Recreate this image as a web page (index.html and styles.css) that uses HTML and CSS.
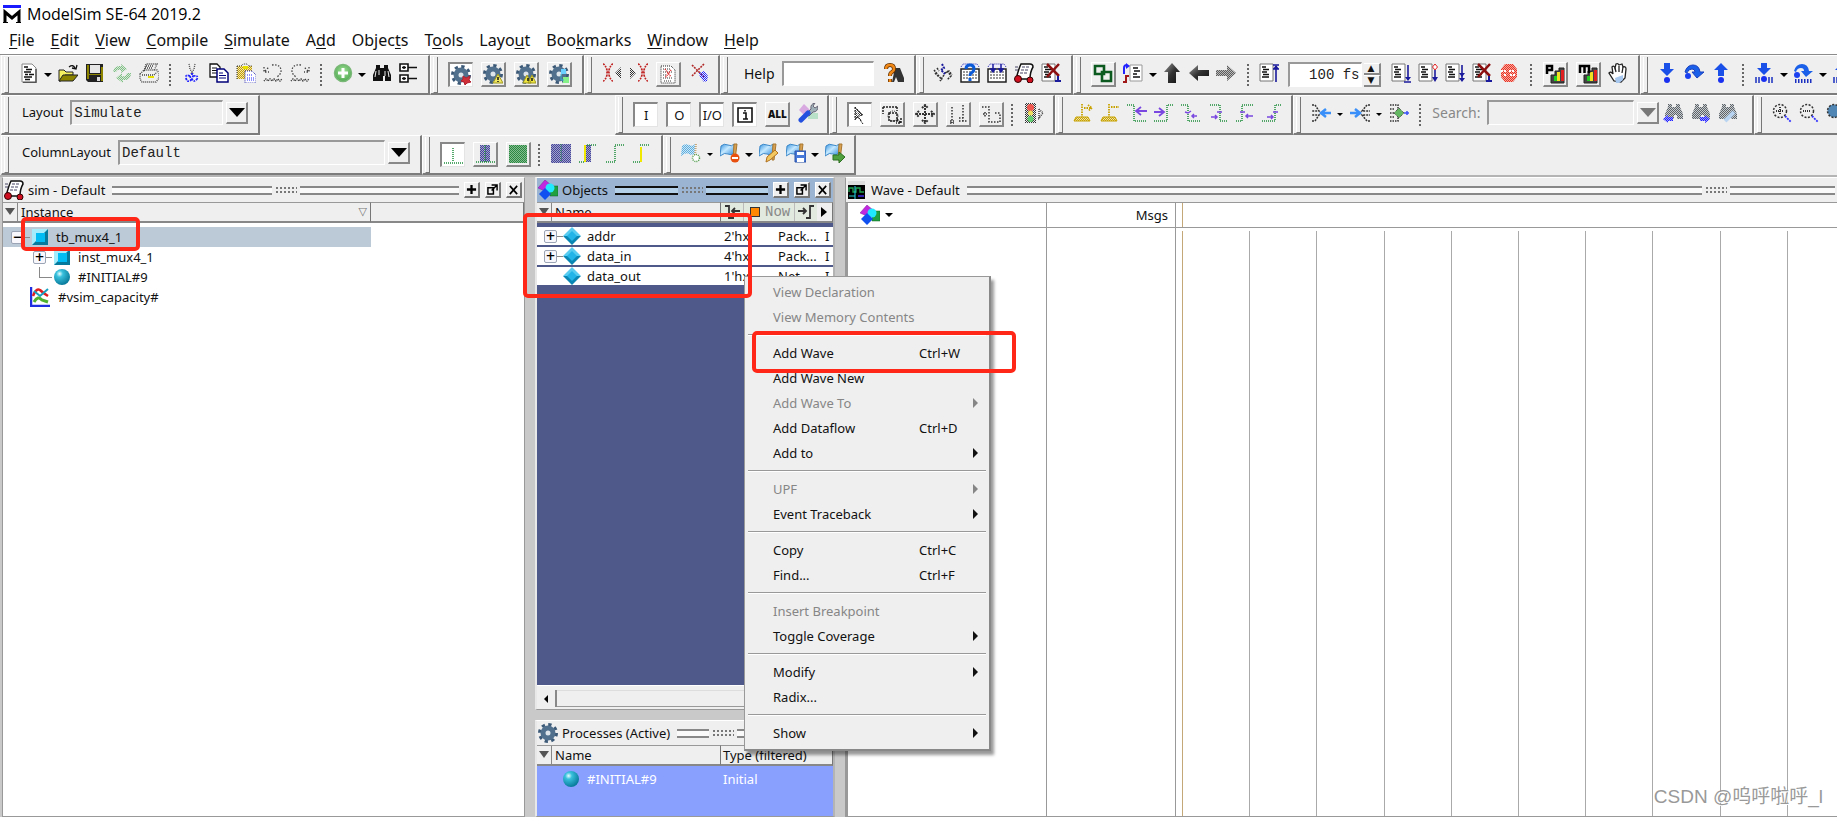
FILE: index.html
```html
<!DOCTYPE html>
<html lang="en">
<head>
    <meta charset="UTF-8">
    <meta name="viewport" content="width=device-width, initial-scale=1.0">
    <title>ModelSim SE-64 2019.2</title>
    <link rel="stylesheet" href="styles.css">
</head>
<body>

<!-- Icon sprite -->
<svg class="sprite" width="0" height="0" aria-hidden="true">
    <defs>
        <pattern id="d-black" width="2" height="2" patternUnits="userSpaceOnUse"><path d="M0 0h1v1H0zM1 1h1v1H1z" fill="#333"/></pattern>
        <pattern id="d-blue" width="2" height="2" patternUnits="userSpaceOnUse"><path d="M0 0h1v1H0zM1 1h1v1H1z" fill="#22f"/></pattern>
        <pattern id="d-sky" width="2" height="2" patternUnits="userSpaceOnUse"><path d="M0 0h1v1H0zM1 1h1v1H1z" fill="#5aaee0"/></pattern>
        <pattern id="d-navy" width="2" height="2" patternUnits="userSpaceOnUse"><path d="M0 0h2v2H0z" fill="#a4a4c8"/><path d="M0 0h1v1H0zM1 1h1v1H1z" fill="#44449c"/></pattern>
        <pattern id="d-green" width="2" height="2" patternUnits="userSpaceOnUse"><path d="M0 0h2v2H0z" fill="#84bc90"/><path d="M0 0h1v1H0zM1 1h1v1H1z" fill="#2a8842"/></pattern>
        <pattern id="d-lime" width="2" height="2" patternUnits="userSpaceOnUse"><path d="M0 0h2v2H0z" fill="#d8e8d8"/><path d="M0 0h1v1H0zM1 1h1v1H1z" fill="#7fbf85"/></pattern>
        <pattern id="d-red" width="2" height="2" patternUnits="userSpaceOnUse"><path d="M0 0h2v2H0z" fill="#f4a8a0"/><path d="M0 0h1v1H0zM1 1h1v1H1z" fill="#ea3323"/></pattern>
        <pattern id="d-gold" width="2" height="2" patternUnits="userSpaceOnUse"><path d="M0 0h2v2H0z" fill="#eee3b0"/><path d="M0 0h1v1H0zM1 1h1v1H1z" fill="#c8a200"/></pattern>
        <linearGradient id="g-grey" x1="0" y1="0" x2="1" y2="1"><stop offset="0" stop-color="#999"/><stop offset=".5" stop-color="#333"/><stop offset="1" stop-color="#111"/></linearGradient>
        <linearGradient id="g-flag" x1="0" y1="0" x2="1" y2="1"><stop offset="0" stop-color="#2f8fe0"/><stop offset=".45" stop-color="#c4e8ff"/><stop offset="1" stop-color="#2a86d8"/></linearGradient>
        <radialGradient id="g-ball" cx=".35" cy=".3" r=".7"><stop offset="0" stop-color="#e8ffff"/><stop offset=".3" stop-color="#38c0dc"/><stop offset="1" stop-color="#0a7c9c"/></radialGradient>
        <radialGradient id="g-add" cx=".5" cy=".4" r=".6"><stop offset="0" stop-color="#a4e49c"/><stop offset="1" stop-color="#4fa850"/></radialGradient>
    </defs>

    <symbol id="logo" viewBox="0 0 18 18"><path d="M0 0h18v3H0z" fill="#1a1aff"/><path d="M2 17V7l7 6 7-6v10" fill="none" stroke="#000" stroke-width="3"/><path d="M0 18h5M13 18h5" stroke="#000" stroke-width="2"/></symbol>
    <symbol id="doc" viewBox="0 0 20 20"><path d="M3 1h10l4 4v14H3z" fill="#fff" stroke="#888"/><path d="M5 4h4M7 6.500h6M5 9h7M6 11.500h3m1 0h5M5 14h8M6 16.500h5" stroke="#111" stroke-width="1.500"/><path d="M17 6v13.500H4" fill="none" stroke="#555" stroke-width="1.500"/></symbol>
    <symbol id="open" viewBox="0 0 20 20"><path d="M11 4q4-3 6 1m2-3l-1 4-4-1" fill="none" stroke="#111" stroke-width="1.300"/><path d="M1 7h5l2 2h7v3H7l-4 6H1z" fill="#f4f060" stroke="#222"/><path d="M5 12h15l-5 6H1z" fill="#8c8400" stroke="#222"/></symbol>
    <symbol id="save" viewBox="0 0 20 20"><path d="M1 1h17v18H3l-2-2z" fill="#222"/><path d="M2 2h2v14H2zM16 4h2v14h-2z" fill="#8c8400"/><path d="M5 2h10v8H5z" fill="#e6e6e6"/><path d="M3 11h14v1H3z" fill="#8c8400"/><path d="M12 14h3v4h-3z" fill="#ddd"/></symbol>
    <symbol id="refresh" viewBox="0 0 20 20"><path d="M1 9q1-7 8-6V1l6 5-6 4V7Q5 6 4 9z" fill="url(#d-lime)"/><path d="M19 10q0 8-8 7v3l-7-5 6-5v3q4 1 5-3z" fill="url(#d-lime)"/></symbol>
    <symbol id="print" viewBox="0 0 20 20"><path d="M5 8l2-7h11l-3 7M1 11l4-4h13l2 3v5l-3 4H3l-2-3zM3 12h12l3-3M7 3h8M6 5h8" fill="none" stroke="#444" stroke-width="1.300" stroke-dasharray="1 1"/><path d="M9 14h6" stroke="#e8e000" stroke-width="2"/></symbol>
    <symbol id="cut" viewBox="0 0 20 20"><path d="M7 1l1 5 3 5M13 1l-1 5-3 5" fill="none" stroke="#444" stroke-width="1.300" stroke-dasharray="1 1"/><path d="M10 10v3M8 13q-5-2-4 2 1 5 5 2zM11 13q6-1 4 3-3 4-5 0z" fill="none" stroke="#22f" stroke-width="1.700" stroke-dasharray="2 1"/></symbol>
    <symbol id="copy" viewBox="0 0 20 20"><path d="M1 1h7l3 3v10H1z" fill="#fff" stroke="#111" stroke-width="1.300"/><path d="M3 5h5M3 7.500h6M3 10h6" stroke="#111"/><path d="M8 6h7l4 4v9H8z" fill="#fff" stroke="#00007a" stroke-width="1.500"/><path d="M10 10h4M10 12.500h7M10 15h7" stroke="#00007a"/></symbol>
    <symbol id="paste" viewBox="0 0 20 20"><path d="M1 3h15v13H1z" fill="url(#d-gold)"/><path d="M1 3h4l2-2h4l2 2h3M1 3v13" fill="none" stroke="#333" stroke-dasharray="1 1"/><path d="M7 3h5v3H7z" fill="#e8e000"/><path d="M9 8h7l4 4v8H9z" fill="#fff" stroke="#22a" stroke-dasharray="1 1"/><path d="M11 12h5M11 15h7M11 17h7" stroke="#22f" stroke-dasharray="1 1"/></symbol>
    <symbol id="undo" viewBox="0 0 20 20"><path d="M1 4v5h5M2 8L6 4M9 2q9-1 9 6 0 3-4 6" fill="none" stroke="#444" stroke-width="1.300" stroke-dasharray="1.500 1.500"/><path d="M1 18l2-2 2 2 2-2 2 2 2-2 2 2 2-2 2 2 2-2" fill="none" stroke="#333" stroke-dasharray="1 1" stroke-width="1.500"/></symbol>
    <symbol id="redo" viewBox="0 0 20 20"><path d="M19 4v5h-5M18 8l-4-4M11 2Q2 1 2 8q0 3 4 6" fill="none" stroke="#444" stroke-width="1.300" stroke-dasharray="1.500 1.500"/><path d="M1 18l2-2 2 2 2-2 2 2 2-2 2 2 2-2 2 2 2-2" fill="none" stroke="#333" stroke-dasharray="1 1" stroke-width="1.500"/></symbol>
    <symbol id="add" viewBox="0 0 20 20"><circle cx="10" cy="10" r="8.500" fill="url(#g-add)" stroke="#7ab878" stroke-width="1.500"/><path d="M10 5v10M5 10h10" stroke="#fff" stroke-width="3"/></symbol>
    <symbol id="find" viewBox="0 0 20 20"><path d="M4 2h4v3h4V2h4v3l3 7v6h-6v-5h-2v5H1v-6l3-7z" fill="#111"/><path d="M4 8l-1 6M7 7v5M13 8v5M16 8l1 6" stroke="#eee" stroke-width="1"/></symbol>
    <symbol id="tree" viewBox="0 0 20 20"><path d="M1 1h8v7H1zM1 12h8v7H1z" fill="#fff" stroke="#111" stroke-width="1.600"/><path d="M3 4.500h4M5 3v3M3 15.500h4M5 14v3M9 4.500h9M9 15.500h9" stroke="#111" stroke-width="1.500"/></symbol>
    <symbol id="gear" viewBox="0 0 20 20"><circle cx="10" cy="10" r="8.500" fill="none" stroke="#3c5a78" stroke-width="3" stroke-dasharray="3.300 3.375"/><circle cx="10" cy="10" r="5" fill="#dde4ea" stroke="#50708e" stroke-width="5"/></symbol>
    <symbol id="gear-red" viewBox="0 0 20 20"><use href="#gear"/><path d="M12 11l3 2 4-2-1 4 2 2-4 1-2 2-1-3-3-1 2-2z" fill="#d03038" stroke="#b02030"/></symbol>
    <symbol id="gear-warn" viewBox="0 0 20 20"><use href="#gear"/><path d="M15 10l5 9H10z" fill="#f0e860" stroke="#a09820"/><path d="M15 13v3M15 17v1" stroke="#111" stroke-width="1.500"/></symbol>
    <symbol id="gear-warns" viewBox="0 0 20 20"><use href="#gear"/><path d="M11 11l4 8H7zM16 11l4 8h-8z" fill="#f0e840" stroke="#a09820"/><path d="M12 14v3M16 14v3" stroke="#111" stroke-width="1.500"/></symbol>
    <symbol id="gear-tree" viewBox="0 0 20 20"><use href="#gear"/><path d="M12 5h5v5h-5z" fill="#6ad0ff"/><path d="M14 13h6v6h-6z" fill="#86f088"/><path d="M12 10v6h3" stroke="#3ab0d0" fill="none"/></symbol>
    <symbol id="x-prev" viewBox="0 0 20 20"><path d="M1 1q2 0 4 6v5q-2 6-4 6M11 1Q9 1 7 7v5q2 6 4 6M5 9h2" fill="none" stroke="#c02020" stroke-width="1.600" stroke-dasharray="2 1"/><path d="M19 4v12l-6-6z" fill="url(#d-black)"/></symbol>
    <symbol id="x-next" viewBox="0 0 20 20"><path d="M9 1q2 0 4 6v5q-2 6-4 6M19 1q-2 0-4 6v5q2 6 4 6M13 9h2" fill="none" stroke="#c02020" stroke-width="1.600" stroke-dasharray="2 1"/><path d="M1 4v12l6-6z" fill="url(#d-black)"/></symbol>
    <symbol id="x-doc" viewBox="0 0 20 20"><path d="M3 2h10l4 4v13H3z" fill="#fff" stroke="#222" stroke-dasharray="1 1"/><path d="M5 5h8M5 8h9M5 11h3M5 14h9M6 17h8" stroke="#333" stroke-dasharray="1 1"/><path d="M7 5l6 8M13 6l-6 8" stroke="#e02020" stroke-dasharray="1 1" stroke-width="1.500"/></symbol>
    <symbol id="x-pen" viewBox="0 0 20 20"><path d="M3 2l12 12M15 1L3 13" stroke="#b02828" stroke-width="1.600" stroke-dasharray="2 1"/><path d="M10 10l5-2 4 5-1 5-3 1-4-5z" fill="url(#d-blue)"/></symbol>
    <symbol id="help-find" viewBox="0 0 20 20"><path d="M11 5h5l4 10v4h-6l-2-5-2 5H8z" fill="#333"/><path d="M2 6q0-4 4-4t4 4q0 2-2 3-2 1-2 4M6 16v3" fill="none" stroke="#5a2c00" stroke-width="4"/><path d="M2 6q0-4 4-4t4 4q0 2-2 3-2 1-2 4M6 16v3" fill="none" stroke="#f08818" stroke-width="2.600"/></symbol>
    <symbol id="compile" viewBox="0 0 20 20"><path d="M1 7l8 10M4 5l2 3M11 12l-4 6M14 8l4 5-4 4M2 10l4 4M12 10l4-2 3 4" fill="none" stroke="#333" stroke-width="1.500" stroke-dasharray="2 1"/><path d="M9 1l2 4-3 2 4 4" fill="none" stroke="#1a1a9c" stroke-width="2" stroke-dasharray="2 1"/></symbol>
    <symbol id="tray" viewBox="0 0 20 20"><path d="M1 4l2-3h14l2 3" fill="#eef" stroke="#22a" stroke-dasharray="1 1"/><path d="M1 6h18v13H1z" fill="#fff" stroke="#222" stroke-width="1.500"/><path d="M3 9h14M3 12h14M3 15h14" stroke="#333" stroke-dasharray="2 1"/></symbol>
    <symbol id="compile-ask" viewBox="0 0 20 20"><use href="#tray"/><path d="M6 6q0-4 4-4t4 4q0 2-2 3.500-2 1-2 3.500M10 15v3" fill="none" stroke="#0a5ad8" stroke-width="3"/></symbol>
    <symbol id="compile-all" viewBox="0 0 20 20"><use href="#tray"/><path d="M6 1v7M4 6l2 3 2-3zM14 1v7M12 6l2 3 2-3z" stroke="#1a1a9c" stroke-width="1.500" fill="#1a1a9c"/></symbol>
    <symbol id="sim" viewBox="0 0 20 20"><path d="M7 1q-2 4-5 15h14q0-7 3-12 0-3-3-3z" fill="#fff" stroke="#111" stroke-width="1.500"/><path d="M8 4h8M7 7h8M6 10h8M1 4h3M1 7h3" stroke="#446" stroke-dasharray="3 1"/><circle cx="4" cy="16" r="3.500" fill="#d01020" stroke="#300"/><circle cx="16" cy="17" r="3" fill="#d01020" stroke="#300"/></symbol>
    <symbol id="script" viewBox="0 0 20 20"><path d="M1 1h13v17H1z" fill="#fff" stroke="#777"/><path d="M3 4h4M4 6.500h6M3 9h5M4 11.500h6M3 14h7" stroke="#111" stroke-width="1.500"/></symbol>
    <symbol id="break" viewBox="0 0 20 20"><use href="#script"/><path d="M6 1l12 12M18 1L6 14" stroke="#8c1010" stroke-width="2.500"/><path d="M17 13v4M14 18h6" stroke="#1a1a9c" stroke-width="2"/></symbol>
    <symbol id="link" viewBox="0 0 20 20"><path d="M2 2h9v8H2zM9 8h9v9H9z" fill="none" stroke="#0c5a20" stroke-width="2.600"/></symbol>
    <symbol id="restart" viewBox="0 0 20 20"><path d="M7 2h12v16H7z" fill="#fff" stroke="#999"/><path d="M10 5h5M11 8h6M10 11h4M10 14h7" stroke="#111" stroke-width="1.500"/><path d="M1 11V5q0-3 3-3" fill="none" stroke="#22f" stroke-width="2"/><path d="M3 0l4 3-4 3z" fill="#22f"/><path d="M0 19h3v-6h3" fill="none" stroke="#a01818" stroke-width="2"/></symbol>
    <symbol id="up" viewBox="0 0 20 20"><path d="M10 0l8 9h-4v11H6V9H2z" fill="url(#g-grey)"/></symbol>
    <symbol id="left" viewBox="0 0 20 20"><path d="M0 10l9-8v5h11v6H9v5z" fill="url(#g-grey)"/></symbol>
    <symbol id="right" viewBox="0 0 20 20"><path d="M20 10l-9-8v5H0v6h11v5z" fill="#bbb"/><path d="M20 10l-9-8v5H0v6h11v5z" fill="url(#d-black)" opacity=".7"/></symbol>
    <symbol id="run-len" viewBox="0 0 20 20"><use href="#script"/><path d="M17 19V3M14 2h6M14 6h6" stroke="#1a1a9c" stroke-width="1.600" fill="none"/><path d="M14 6l3-4 3 4z" fill="#1a1a9c"/></symbol>
    <symbol id="run" viewBox="0 0 20 20"><use href="#script"/><path d="M17 2v12M13 19h7" stroke="#1a1a9c" stroke-width="1.600"/><path d="M14 14h6l-3 4z" fill="#1a1a9c"/></symbol>
    <symbol id="run-c" viewBox="0 0 20 20"><use href="#script"/><path d="M17 7v8" stroke="#1a1a9c" stroke-width="1.600"/><path d="M14 14h6l-3 5z" fill="#1a1a9c"/><path d="M17 1l2.500 3-2.500 3-2.500-3z" fill="#fff" stroke="#e02020"/></symbol>
    <symbol id="run-all" viewBox="0 0 20 20"><use href="#script"/><path d="M17 2v14" stroke="#1a1a9c" stroke-width="1.600"/><path d="M14 10h6l-3 4zM14 15h6l-3 4z" fill="#1a1a9c"/></symbol>
    <symbol id="stop" viewBox="0 0 20 20"><path d="M6 1h8l4 5v8l-4 5H6l-4-5V6z" fill="url(#d-red)"/><path d="M2 8h6M10 8h6M5 12h3M11 12h5" stroke="#fff" stroke-width="2" stroke-dasharray="2 1"/></symbol>
    <symbol id="bars" viewBox="0 0 20 20"><path d="M6 19V11h4V7h4V4h5v15z" fill="#444" stroke="#222"/><path d="M9 12h3v5H9z" fill="#20d020"/><path d="M12 8h3v9h-3z" fill="#f0e020"/><path d="M16 6h3v11h-3z" fill="#e02020"/></symbol>
    <symbol id="prof-p" viewBox="0 0 20 20"><use href="#bars"/><path d="M2 10V2h5v4H2" fill="none" stroke="#000" stroke-width="2.500"/></symbol>
    <symbol id="prof-m" viewBox="0 0 20 20"><use href="#bars"/><path d="M2 9V2h9v7M6.500 2v7" fill="none" stroke="#000" stroke-width="2.500"/></symbol>
    <symbol id="hand" viewBox="0 0 20 20"><path d="M6 18L1 10q2-2 4 1L4 4q2-2 3 1l1-4q2-1 3 1l3-1 1 3q3-1 3 2l-1 9-4 4z" fill="#fff" stroke="#222" stroke-width="1.300"/><path d="M7 5l1 4M11 3v6M15 4l-1 6" stroke="#222" stroke-width="1.300"/><path d="M7 15l8-3v5l-4 3H8z" fill="#a8c8f0"/></symbol>
    <symbol id="step-in" viewBox="0 0 20 20"><path d="M7 0h6v6h4l-7 7-7-7h4z" fill="#1a50e8"/><circle cx="10" cy="17" r="3" fill="#1a30f0"/></symbol>
    <symbol id="step-over" viewBox="0 0 20 20"><path d="M1 9Q3 2 9 2q6 0 7 7h4l-7 6-5-6h3q0-3-3-3-4 0-5 4z" fill="#1a60e8" stroke="#1a40c0"/><circle cx="4" cy="13" r="3" fill="#1a40f0"/></symbol>
    <symbol id="step-out" viewBox="0 0 20 20"><path d="M7 13h6V7h4l-7-7-7 7h4z" fill="#1a50e8"/><circle cx="10" cy="17" r="3" fill="#1a30f0"/></symbol>
    <symbol id="in-cur" viewBox="0 0 20 20"><path d="M7 0h6v5h4l-7 7-7-7h4z" fill="#1a50e8"/><circle cx="10" cy="16" r="3" fill="#1a30f0"/><path d="M2 14v6M5 14v6M15 14v6M18 14v6" stroke="#1a30c0" stroke-width="1.500"/></symbol>
    <symbol id="over-cur" viewBox="0 0 20 20"><path d="M1 8Q3 1 9 1q6 0 7 7h4l-7 6-5-6h3q0-3-3-3-4 0-5 4z" fill="#1a60e8"/><circle cx="4" cy="12" r="3" fill="#1a40f0"/><path d="M2 18h18" stroke="#1a30c0" stroke-width="4" stroke-dasharray="1.500 1.500"/></symbol>
    <symbol id="out-cur" viewBox="0 0 20 20"><path d="M7 12h6V7h4l-7-7-7 7h4z" fill="#1a50e8"/><circle cx="10" cy="16" r="3" fill="#1a30f0"/><path d="M2 14v6M5 14v6" stroke="#1a30c0" stroke-width="1.500"/></symbol>
    <symbol id="info" viewBox="0 0 20 20"><path d="M3 3h14v14H3z" fill="#fff" stroke="#111" stroke-width="1.600"/><path d="M8 8h3v6M8 14h5M10 5v1.500" fill="none" stroke="#111" stroke-width="1.600"/></symbol>
    <symbol id="wrench" viewBox="0 0 20 20"><path d="M6 1l6 6-6 5-5-5z" fill="#d8a8e0"/><path d="M10 10h10v6H10z" fill="#b8e0c8"/><path d="M8 11l5-5q-1-5 4-6l-2 3 2 2 3-2q0 6-5 6l-4 4z" fill="#a0b0b8" stroke="#667"/><path d="M3 17l7-7" stroke="#2450e0" stroke-width="5" stroke-linecap="round"/></symbol>
    <symbol id="pointer" viewBox="0 0 20 20"><path d="M5 2v13l3-3 5 7M5 2l8 8-5 1" fill="url(#d-black)" stroke="#222" stroke-dasharray="2 1"/></symbol>
    <symbol id="zoom-area" viewBox="0 0 20 20"><path d="M1 3h14M1 3v7M15 3v4M7 9h8v8H7zM15 15l4 4M19 14v5h-5" fill="none" stroke="#222" stroke-width="1.500" stroke-dasharray="2 1"/><circle cx="11" cy="12" r="5" fill="none" stroke="#222" stroke-dasharray="1 1"/></symbol>
    <symbol id="pan" viewBox="0 0 20 20"><path d="M10 1v18M1 10h18M7 4l3-3 3 3M7 16l3 3 3-3M4 7l-3 3 3 3M16 7l3 3-3 3" fill="none" stroke="#333" stroke-width="2" stroke-dasharray="2 1"/></symbol>
    <symbol id="two-cur" viewBox="0 0 20 20"><path d="M4 3v16M15 1v18M2 17h4M11 17h8M2 19h4M11 14h4" fill="none" stroke="#333" stroke-width="1.500" stroke-dasharray="1.500 1.500"/></symbol>
    <symbol id="edit-wave" viewBox="0 0 20 20"><path d="M1 3h7v15h11V9M2 10h4M4 8v5M14 9h5" fill="none" stroke="#333" stroke-width="1.500" stroke-dasharray="1.500 1.500"/></symbol>
    <symbol id="traffic" viewBox="0 0 20 20"><path d="M1 0h11v20H1z" fill="url(#d-black)"/><circle cx="6.500" cy="4.500" r="3.500" fill="#f05850"/><circle cx="6.500" cy="10" r="2.500" fill="#f0e060"/><circle cx="6.500" cy="16" r="3" fill="#60d070"/><path d="M15 6l4 4-4 5z" fill="none" stroke="#444" stroke-dasharray="1 1" stroke-width="1.500"/></symbol>
    <symbol id="cur-add" viewBox="0 0 20 20"><path d="M9 1v13M11 5h7M15 2l4 3-4 3" fill="none" stroke="#c8a200" stroke-width="1.800" stroke-dasharray="1.500 1"/><path d="M3 14h12l2 4H1z" fill="url(#d-gold)" stroke="#c8a200"/></symbol>
    <symbol id="cur-del" viewBox="0 0 20 20"><path d="M9 1v13M11 4h8" fill="none" stroke="#c8a200" stroke-width="1.800" stroke-dasharray="1.500 1"/><path d="M3 14h12l2 4H1z" fill="url(#d-gold)" stroke="#c8a200"/></symbol>
    <symbol id="fall" viewBox="0 0 20 20"><path d="M0 2h7v16h12" fill="none" stroke="#1f8f3c" stroke-width="1.500" stroke-dasharray="1 1"/></symbol>
    <symbol id="rise" viewBox="0 0 20 20"><path d="M0 18h13V2h7" fill="none" stroke="#1f8f3c" stroke-width="1.500" stroke-dasharray="1 1"/></symbol>
    <symbol id="prev-tr" viewBox="0 0 20 20"><use href="#fall"/><path d="M20 8H10M14 4l-5 4 5 4" fill="none" stroke="#7a48e0" stroke-width="1.800"/></symbol>
    <symbol id="next-tr" viewBox="0 0 20 20"><use href="#rise"/><path d="M0 9h9M5 5l5 4-5 4" fill="none" stroke="#7a48e0" stroke-width="1.800"/></symbol>
    <symbol id="prev-fall" viewBox="0 0 20 20"><use href="#fall"/><path d="M4 9l3 1 3-2M16 13h-5M13 11l-2 2 2 2" fill="none" stroke="#7a48e0" stroke-width="1.500"/></symbol>
    <symbol id="next-fall" viewBox="0 0 20 20"><path d="M2 2h10v16h8" fill="none" stroke="#1f8f3c" stroke-width="1.500" stroke-dasharray="1 1"/><path d="M9 9h5M3 14h6M7 12l2 2-2 2" fill="none" stroke="#7a48e0" stroke-width="1.500"/></symbol>
    <symbol id="prev-rise" viewBox="0 0 20 20"><path d="M1 18h6V2h12" fill="none" stroke="#1f8f3c" stroke-width="1.500" stroke-dasharray="1 1"/><path d="M5 9h5M18 13h-7M13 11l-2 2 2 2" fill="none" stroke="#7a48e0" stroke-width="1.500"/></symbol>
    <symbol id="next-rise" viewBox="0 0 20 20"><use href="#rise"/><path d="M11 9h5M5 14h6M9 12l2 2-2 2" fill="none" stroke="#7a48e0" stroke-width="1.500"/></symbol>
    <symbol id="expand-l" viewBox="0 0 20 20"><path d="M1 2h3l4 6H1M1 18h3l4-6H1" fill="none" stroke="#333" stroke-width="1.500" stroke-dasharray="2 1"/><path d="M20 10h-8M15 6l-5 4 5 4" fill="none" stroke="#3a90f8" stroke-width="2.500"/></symbol>
    <symbol id="expand-r" viewBox="0 0 20 20"><path d="M20 2h-3l-5 6h8M20 18h-3l-5-6h8" fill="none" stroke="#333" stroke-width="1.500" stroke-dasharray="2 1"/><path d="M0 10h8M5 6l5 4-5 4" fill="none" stroke="#3a90f8" stroke-width="2.500"/></symbol>
    <symbol id="expand-all" viewBox="0 0 20 20"><path d="M1 2h8v5M1 10h6M1 18h8v-5M1 6h5M1 14h5" fill="none" stroke="#333" stroke-width="1.500" stroke-dasharray="1.500 1"/><path d="M10 5l5 5-5 5-5-5z" fill="#64b864" stroke="#333" stroke-dasharray="1 1"/><path d="M15 10h5M18 8v4" stroke="#3a50f8" stroke-width="1.500"/></symbol>
    <symbol id="find-off" viewBox="0 0 20 20"><path d="M5 1h4v3h4V1h4v3l3 7v5h-6v-4h-3v4H2v-5l3-7z" fill="#c4ccd4"/><path d="M5 1h4v3h4V1h4v3l3 7v5h-6v-4h-3v4H2v-5l3-7z" fill="url(#d-black)" opacity=".7"/></symbol>
    <symbol id="find-prev" viewBox="0 0 20 20"><use href="#find-off"/><path d="M0 16l5-4v2h5v4H5v2z" fill="#99f"/><path d="M0 16l5-4v2h5v4H5v2z" fill="url(#d-blue)"/></symbol>
    <symbol id="find-next" viewBox="0 0 20 20"><use href="#find-off"/><path d="M20 16l-5-4v2h-5v4h5v2z" fill="#99f"/><path d="M20 16l-5-4v2h-5v4h5v2z" fill="url(#d-blue)"/></symbol>
    <symbol id="find-opt" viewBox="0 0 20 20"><use href="#find-off"/><path d="M8 18l9-9" stroke="#b8d4f0" stroke-width="4"/></symbol>
    <symbol id="zoom-in" viewBox="0 0 20 20"><circle cx="8" cy="8" r="6.500" fill="none" stroke="#333" stroke-width="1.500" stroke-dasharray="2 1.500"/><path d="M8 4v8M4 8h8" stroke="#333" stroke-width="2" stroke-dasharray="1 1"/><path d="M13 13l6 6" stroke="#33f" stroke-width="1.800" stroke-dasharray="2 1"/></symbol>
    <symbol id="zoom-out" viewBox="0 0 20 20"><circle cx="8" cy="8" r="6.500" fill="none" stroke="#333" stroke-width="1.500" stroke-dasharray="2 1.500"/><path d="M4 8h8" stroke="#333" stroke-width="2" stroke-dasharray="1 1"/><path d="M13 13l6 6" stroke="#33f" stroke-width="1.800" stroke-dasharray="2 1"/></symbol>
    <symbol id="zoom-full" viewBox="0 0 20 20"><circle cx="8" cy="8" r="6.500" fill="#4f86b4" stroke="#333" stroke-width="1.500" stroke-dasharray="2 1.500"/><path d="M13 13l6 6" stroke="#33f" stroke-width="1.800"/></symbol>
    <symbol id="cov-line" viewBox="0 0 20 20"><path d="M10 3v14M1 18h19" stroke="#1f8f3c" stroke-width="1.500" stroke-dasharray="1 1"/></symbol>
    <symbol id="cov-blue" viewBox="0 0 20 20"><path d="M5 1h10v17H5z" fill="url(#d-navy)"/><path d="M10 1v17M1 18h19" stroke="#1f8f3c" stroke-width="1.500" stroke-dasharray="1 1"/></symbol>
    <symbol id="cov-green" viewBox="0 0 20 20"><path d="M1 1h18v18H1z" fill="url(#d-green)"/></symbol>
    <symbol id="cov-navy" viewBox="0 0 20 20"><path d="M0 1h20v19H0z" fill="url(#d-navy)"/><path d="M10 1v18" stroke="#1f8f3c" stroke-dasharray="1 1"/></symbol>
    <symbol id="edge-b" viewBox="0 0 20 20"><path d="M8 2h5v17H8z" fill="url(#d-navy)"/><path d="M7 2v17" stroke="#f0e800" stroke-width="2"/><path d="M1 19h6M9 2h10" stroke="#1f8f3c" stroke-width="1.500" stroke-dasharray="1 1"/></symbol>
    <symbol id="edge-g" viewBox="0 0 20 20"><path d="M1 19h9V2h9" fill="none" stroke="#1f8f3c" stroke-width="1.500" stroke-dasharray="1 1"/></symbol>
    <symbol id="edge-y" viewBox="0 0 20 20"><path d="M9 4v15" stroke="#f0e800" stroke-width="2"/><path d="M1 19h7M8 2h10" fill="none" stroke="#1f8f3c" stroke-width="1.500" stroke-dasharray="1 1"/></symbol>
    <symbol id="flag" viewBox="0 0 20 20"><path d="M1 3q3-3 7-1t6-1v9q-3 3-6 1t-8 2z" fill="url(#g-flag)" stroke="#3c88c8"/><path d="M14 1h3l-2 16h-2z" fill="#d8a050" stroke="#a87830"/></symbol>
    <symbol id="flag-add" viewBox="0 0 20 20"><path d="M1 3q3-3 7-1t6-1v9q-3 3-6 1t-8 2z" fill="#cfe6f4"/><path d="M1 3q3-3 7-1t6-1v9q-3 3-6 1t-8 2z" fill="url(#d-sky)"/><path d="M15 1l-1 12" stroke="#c8a878" stroke-width="2" stroke-dasharray="1 1"/><circle cx="15" cy="15" r="3.500" fill="#fff" stroke="#4f9c4c" stroke-width="1.500" stroke-dasharray="1 1"/></symbol>
    <symbol id="flag-del" viewBox="0 0 20 20"><use href="#flag"/><circle cx="15" cy="15" r="4.500" fill="#e85010"/><path d="M12 15h6" stroke="#fff" stroke-width="2"/></symbol>
    <symbol id="flag-edit" viewBox="0 0 20 20"><use href="#flag"/><path d="M7 19l1-5 8-7 3 3-8 7z" fill="#f4c860" stroke="#b07020"/></symbol>
    <symbol id="flag-save" viewBox="0 0 20 20"><use href="#flag"/><path d="M9 8h11v11H9z" fill="#4878d8" stroke="#2850a8"/><path d="M11 9h7v3h-7zM11 15h7v4h-7z" fill="#fff"/></symbol>
    <symbol id="flag-go" viewBox="0 0 20 20"><use href="#flag"/><path d="M8 12h6V9l6 5-6 6v-3H8z" fill="#50a040" stroke="#2c7020"/></symbol>
    <symbol id="shapes" viewBox="0 0 20 20"><path d="M7 0l6 5-6 6-7-3z" fill="#c028e0" stroke="#801898" stroke-width=".5"/><path d="M12 6h8v10h-8z" fill="#20a040" stroke="#106020" stroke-width=".5"/><circle cx="12" cy="8" r="4.500" fill="#20e8ff"/><path d="M7 8l6 6-6 6-6-6z" fill="#1050f0"/></symbol>
    <symbol id="waveform" viewBox="0 0 20 20"><path d="M1 1h17v18H1z" fill="#000"/><path d="M1 1h17v4H1z" fill="#ddd"/><path d="M2 12V8h4v4h3V8h4v4h4" fill="none" stroke="#20a050" stroke-width="1.300"/><path d="M2 16h6" stroke="#20a0a0" stroke-width="1.300"/><path d="M11 16h6" stroke="#3020b0" stroke-width="2"/><path d="M8 6v13" stroke="#20d0f0"/></symbol>
    <symbol id="cube" viewBox="0 0 16 16"><path d="M0 0h16v16H0z" fill="#067a9c"/><path d="M0 0h16l-4 4H4v8l-4 4z" fill="#a4ecfc"/><path d="M4 4h9v9H4z" fill="#00bcf4"/></symbol>
    <symbol id="ball" viewBox="0 0 16 16"><circle cx="8" cy="8" r="8" fill="url(#g-ball)"/></symbol>
    <symbol id="diamond" viewBox="0 0 18 18"><path d="M9 0l9 9H0z" fill="#58ccf0"/><path d="M0 9h18l-9 9z" fill="#0a86b4"/><path d="M9 4l5 5-5 5-5-5z" fill="#20b4e8"/></symbol>
    <symbol id="capacity" viewBox="0 0 20 20"><path d="M1 0v19h19" fill="none" stroke="#2030e0" stroke-width="2.500"/><path d="M3 9q3-8 7-6 3 3 8 6" fill="none" stroke="#e02020" stroke-width="2.500"/><path d="M4 4l6 5 8-7" fill="none" stroke="#18a0c0" stroke-width="2"/><path d="M4 15q4-7 8-2l6 2" fill="none" stroke="#50b030" stroke-width="3"/></symbol>
    <symbol id="plus" viewBox="0 0 12 12"><path d="M6 1v10M1 6h10" stroke="#000" stroke-width="2.500"/></symbol>
    <symbol id="undock" viewBox="0 0 12 12"><path d="M1 4h6v7H1zM5 1h6v6M11 1L5 7" fill="none" stroke="#000" stroke-width="1.600"/></symbol>
    <symbol id="close" viewBox="0 0 12 12"><path d="M2 2l8 9M10 2l-8 9" stroke="#000" stroke-width="1.800"/></symbol>
    <symbol id="now-l" viewBox="0 0 18 14"><path d="M2 1h4v12h5M17 6H9M12 3L9 6l3 3" fill="none" stroke="#333" stroke-width="1.800"/></symbol>
    <symbol id="now-r" viewBox="0 0 18 14"><path d="M17 1h-4v12H9M1 6h8M6 3l3 3-3 3" fill="none" stroke="#333" stroke-width="1.800"/></symbol>
</svg>

<header class="titlebar">
    <svg class="logo"><use href="#logo"/></svg>
    <span>ModelSim SE-64 2019.2</span>
</header>

<nav class="menubar">
    <button><u>F</u>ile</button>
    <button><u>E</u>dit</button>
    <button><u>V</u>iew</button>
    <button><u>C</u>ompile</button>
    <button><u>S</u>imulate</button>
    <button>A<u>d</u>d</button>
    <button>Objec<u>t</u>s</button>
    <button>T<u>o</u>ols</button>
    <button>Layo<u>u</u>t</button>
    <button>Boo<u>k</u>marks</button>
    <button><u>W</u>indow</button>
    <button><u>H</u>elp</button>
</nav>

<!-- Toolbars -->
<div class="toolbars">
    <div class="toolrow">
        <div class="toolbar">
            <button class="tool" title="New"><svg><use href="#doc"/></svg></button>
            <button class="caret" title="New menu"></button>
            <button class="tool" title="Open"><svg><use href="#open"/></svg></button>
            <button class="tool" title="Save"><svg><use href="#save"/></svg></button>
            <button class="tool" title="Reload"><svg><use href="#refresh"/></svg></button>
            <button class="tool" title="Print"><svg><use href="#print"/></svg></button>
            <span class="sep"></span>
            <button class="tool" title="Cut"><svg><use href="#cut"/></svg></button>
            <button class="tool" title="Copy"><svg><use href="#copy"/></svg></button>
            <button class="tool" title="Paste"><svg><use href="#paste"/></svg></button>
            <button class="tool" title="Undo"><svg><use href="#undo"/></svg></button>
            <button class="tool" title="Redo"><svg><use href="#redo"/></svg></button>
            <span class="sep"></span>
            <button class="tool" title="Add"><svg><use href="#add"/></svg></button>
            <button class="caret" title="Add menu"></button>
            <button class="tool" title="Find"><svg><use href="#find"/></svg></button>
            <button class="tool" title="Expand"><svg><use href="#tree"/></svg></button>
        </div>
        <div class="toolbar">
            <button class="tool boxed on" title="Errors"><svg><use href="#gear-red"/></svg></button>
            <button class="tool boxed" title="Warning"><svg><use href="#gear-warn"/></svg></button>
            <button class="tool boxed" title="Warnings"><svg><use href="#gear-warns"/></svg></button>
            <button class="tool boxed" title="Hierarchy"><svg><use href="#gear-tree"/></svg></button>
        </div>
        <div class="toolbar">
            <button class="tool" title="Previous X"><svg><use href="#x-prev"/></svg></button>
            <button class="tool" title="Next X"><svg><use href="#x-next"/></svg></button>
            <button class="tool boxed" title="Report"><svg><use href="#x-doc"/></svg></button>
            <button class="tool" title="Clear"><svg><use href="#x-pen"/></svg></button>
        </div>
        <div class="toolbar help-bar">
            <label for="helpText">Help</label>
            <input class="field help-field" type="text" id="helpText">
            <button class="tool" title="Search help"><svg><use href="#help-find"/></svg></button>
        </div>
        <div class="toolbar">
            <button class="tool" title="Compile"><svg><use href="#compile"/></svg></button>
            <button class="tool" title="Compile out of date"><svg><use href="#compile-ask"/></svg></button>
            <button class="tool" title="Compile all"><svg><use href="#compile-all"/></svg></button>
            <button class="tool" title="Simulate"><svg><use href="#sim"/></svg></button>
            <button class="tool" title="Break"><svg><use href="#break"/></svg></button>
        </div>
        <div class="toolbar">
            <button class="tool boxed" title="Environment"><svg><use href="#link"/></svg></button>
            <button class="tool" title="Restart"><svg><use href="#restart"/></svg></button>
            <button class="caret" title="Restart menu"></button>
            <button class="tool" title="Up"><svg><use href="#up"/></svg></button>
            <button class="tool" title="Back"><svg><use href="#left"/></svg></button>
            <button class="tool" title="Forward"><svg><use href="#right"/></svg></button>
            <span class="sep"></span>
            <button class="tool" title="Run length"><svg><use href="#run-len"/></svg></button>
            <input class="field time-field" type="text" value="100 fs" aria-label="Run length">
            <span class="spinner"><button title="Increase">▲</button><button title="Decrease">▼</button></span>
            <button class="tool" title="Run"><svg><use href="#run"/></svg></button>
            <button class="tool" title="Continue run"><svg><use href="#run-c"/></svg></button>
            <button class="tool" title="Run all"><svg><use href="#run-all"/></svg></button>
            <button class="tool" title="Break"><svg><use href="#break"/></svg></button>
            <button class="tool" title="Stop"><svg><use href="#stop"/></svg></button>
            <span class="sep"></span>
            <button class="tool boxed" title="Performance profile"><svg><use href="#prof-p"/></svg></button>
            <button class="tool boxed" title="Memory profile"><svg><use href="#prof-m"/></svg></button>
            <button class="tool" title="Edit"><svg><use href="#hand"/></svg></button>
        </div>
        <div class="toolbar last">
            <button class="tool" title="Step into"><svg><use href="#step-in"/></svg></button>
            <button class="tool" title="Step over"><svg><use href="#step-over"/></svg></button>
            <button class="tool" title="Step out"><svg><use href="#step-out"/></svg></button>
            <span class="sep"></span>
            <button class="tool" title="Step into current"><svg><use href="#in-cur"/></svg></button>
            <button class="caret" title="Step into menu"></button>
            <button class="tool" title="Step over current"><svg><use href="#over-cur"/></svg></button>
            <button class="caret" title="Step over menu"></button>
            <button class="tool" title="Step out current"><svg><use href="#out-cur"/></svg></button>
        </div>
    </div>

    <div class="toolrow">
        <div class="toolbar combo-bar">
            <label for="layoutSelect">Layout</label>
            <select class="field layout-select" id="layoutSelect"><option>Simulate</option></select>
            <button class="drop" title="Choose layout"></button>
        </div>
        <div class="toolbar push">
            <button class="tool boxed on" title="Inputs">I</button>
            <button class="tool boxed on" title="Outputs">O</button>
            <button class="tool boxed on" title="Inouts">I/O</button>
            <button class="tool boxed on" title="Internals"><svg><use href="#info"/></svg></button>
            <button class="tool boxed all" title="All">ALL</button>
            <button class="tool" title="Settings"><svg><use href="#wrench"/></svg></button>
        </div>
        <div class="toolbar">
            <button class="tool boxed on" title="Select mode"><svg><use href="#pointer"/></svg></button>
            <button class="tool boxed" title="Zoom mode"><svg><use href="#zoom-area"/></svg></button>
            <button class="tool boxed" title="Pan mode"><svg><use href="#pan"/></svg></button>
            <button class="tool boxed" title="Two cursor mode"><svg><use href="#two-cur"/></svg></button>
            <button class="tool boxed" title="Edit mode"><svg><use href="#edit-wave"/></svg></button>
            <span class="sep"></span>
            <button class="tool" title="Stop drawing"><svg><use href="#traffic"/></svg></button>
        </div>
        <div class="toolbar">
            <button class="tool" title="Insert cursor"><svg><use href="#cur-add"/></svg></button>
            <button class="tool" title="Delete cursor"><svg><use href="#cur-del"/></svg></button>
            <button class="tool" title="Previous transition"><svg><use href="#prev-tr"/></svg></button>
            <button class="tool" title="Next transition"><svg><use href="#next-tr"/></svg></button>
            <button class="tool" title="Previous falling edge"><svg><use href="#prev-fall"/></svg></button>
            <button class="tool" title="Next falling edge"><svg><use href="#next-fall"/></svg></button>
            <button class="tool" title="Previous rising edge"><svg><use href="#prev-rise"/></svg></button>
            <button class="tool" title="Next rising edge"><svg><use href="#next-rise"/></svg></button>
        </div>
        <div class="toolbar search-bar">
            <button class="tool" title="Expand drivers"><svg><use href="#expand-l"/></svg></button>
            <button class="caret small" title="Drivers menu"></button>
            <button class="tool" title="Expand readers"><svg><use href="#expand-r"/></svg></button>
            <button class="caret small" title="Readers menu"></button>
            <button class="tool" title="Expand all"><svg><use href="#expand-all"/></svg></button>
            <span class="sep"></span>
            <label class="off" for="searchText">Search:</label>
            <input class="field search-field" type="text" id="searchText" disabled>
            <button class="drop off" title="Search history"></button>
            <button class="tool" title="Find previous"><svg><use href="#find-prev"/></svg></button>
            <button class="tool" title="Find next"><svg><use href="#find-next"/></svg></button>
            <button class="tool" title="Search options"><svg><use href="#find-opt"/></svg></button>
        </div>
        <div class="toolbar last">
            <button class="tool" title="Zoom in"><svg><use href="#zoom-in"/></svg></button>
            <button class="tool" title="Zoom out"><svg><use href="#zoom-out"/></svg></button>
            <button class="tool" title="Zoom full"><svg><use href="#zoom-full"/></svg></button>
        </div>
    </div>

    <div class="toolrow">
        <div class="toolbar combo-bar">
            <label for="columnSelect">ColumnLayout</label>
            <select class="field column-select" id="columnSelect"><option>Default</option></select>
            <button class="drop" title="Choose column layout"></button>
        </div>
        <div class="toolbar">
            <button class="tool boxed on" title="Line"><svg><use href="#cov-line"/></svg></button>
            <button class="tool boxed" title="Partial"><svg><use href="#cov-blue"/></svg></button>
            <button class="tool boxed" title="Full"><svg><use href="#cov-green"/></svg></button>
            <span class="sep"></span>
            <button class="tool" title="Expanded time off"><svg><use href="#cov-navy"/></svg></button>
            <button class="tool" title="Expanded time deltas"><svg><use href="#edge-b"/></svg></button>
            <button class="tool" title="Expanded time events"><svg><use href="#edge-g"/></svg></button>
            <button class="tool" title="Expand at cursor"><svg><use href="#edge-y"/></svg></button>
        </div>
        <div class="toolbar">
            <button class="tool" title="Add bookmark"><svg><use href="#flag-add"/></svg></button>
            <button class="caret small" title="Add bookmark menu"></button>
            <button class="tool" title="Delete bookmark"><svg><use href="#flag-del"/></svg></button>
            <button class="caret" title="Delete bookmark menu"></button>
            <button class="tool" title="Edit bookmark"><svg><use href="#flag-edit"/></svg></button>
            <button class="tool" title="Save bookmarks"><svg><use href="#flag-save"/></svg></button>
            <button class="caret" title="Save bookmarks menu"></button>
            <button class="tool" title="Go to bookmark"><svg><use href="#flag-go"/></svg></button>
        </div>
    </div>
</div>

<!-- Docked panes -->
<main class="workspace">
    <section class="pane sim-pane">
        <div class="pane-title">
            <svg class="icon"><use href="#sim"/></svg>
            <span>sim - Default</span>
            <i class="rail"></i><i class="dots"></i><i class="rail"></i>
            <button class="win" title="Zoom"><svg><use href="#plus"/></svg></button>
            <button class="win" title="Undock"><svg><use href="#undock"/></svg></button>
            <button class="win" title="Close"><svg><use href="#close"/></svg></button>
        </div>
        <table class="grid sim-grid">
            <thead>
                <tr><th><i class="pick"></i>Instance<i class="sort">▽</i></th><th></th></tr>
            </thead>
            <tbody>
                <tr class="selected"><td><div class="node"><i class="twist">−</i><i class="dash"></i><svg class="shape"><use href="#cube"/></svg>tb_mux4_1</div></td><td></td></tr>
                <tr><td><div class="node child"><i class="twist">+</i><i class="dash"></i><svg class="shape"><use href="#cube"/></svg>inst_mux4_1</div></td><td></td></tr>
                <tr><td><div class="node child"><i class="elbow"></i><svg class="shape"><use href="#ball"/></svg>#INITIAL#9</div></td><td></td></tr>
                <tr><td><div class="node leaf"><svg class="shape wide"><use href="#capacity"/></svg>#vsim_capacity#</div></td><td></td></tr>
            </tbody>
        </table>
    </section>

    <div class="middle">
        <section class="pane objects-pane">
            <div class="pane-title active">
                <svg class="icon"><use href="#shapes"/></svg>
                <span>Objects</span>
                <i class="rail"></i><i class="dots"></i><i class="rail"></i>
                <button class="win" title="Zoom"><svg><use href="#plus"/></svg></button>
                <button class="win" title="Undock"><svg><use href="#undock"/></svg></button>
                <button class="win" title="Close"><svg><use href="#close"/></svg></button>
            </div>
            <table class="grid objects-grid">
                <colgroup><col class="c-name"><col class="c-value"><col class="c-kind"><col></colgroup>
                <thead>
                    <tr>
                        <th><i class="pick"></i>Name</th>
                        <th colspan="3">
                            <div class="now-bar">
                                <svg><use href="#now-l"/></svg>
                                <span class="now"><i></i>Now</span>
                                <svg><use href="#now-r"/></svg>
                                <b></b>
                            </div>
                        </th>
                    </tr>
                </thead>
                <tbody>
                    <tr><td><div class="node"><i class="twist">+</i><i class="dash"></i><svg class="shape gem"><use href="#diamond"/></svg>addr</div></td><td>2'hx</td><td>Pack...</td><td>I</td></tr>
                    <tr><td><div class="node"><i class="twist">+</i><i class="dash"></i><svg class="shape gem"><use href="#diamond"/></svg>data_in</div></td><td>4'hx</td><td>Pack...</td><td>I</td></tr>
                    <tr><td><div class="node"><i class="twist none"></i><i class="dash none"></i><svg class="shape gem"><use href="#diamond"/></svg>data_out</div></td><td>1'hx</td><td>Net</td><td>I</td></tr>
                </tbody>
            </table>
            <div class="hscroll"><button title="Scroll left"></button><span></span></div>
        </section>

        <section class="pane process-pane">
            <div class="pane-title">
                <svg class="icon"><use href="#gear"/></svg>
                <span>Processes (Active)</span>
                <i class="rail"></i><i class="dots"></i><i class="rail"></i>
                <button class="win" title="Zoom"><svg><use href="#plus"/></svg></button>
                <button class="win" title="Undock"><svg><use href="#undock"/></svg></button>
                <button class="win" title="Close"><svg><use href="#close"/></svg></button>
            </div>
            <table class="grid process-grid">
                <colgroup><col class="c-name"><col></colgroup>
                <thead>
                    <tr><th><i class="pick"></i>Name</th><th>Type (filtered)</th></tr>
                </thead>
                <tbody>
                    <tr><td><div class="node"><svg class="shape"><use href="#ball"/></svg>#INITIAL#9</div></td><td>Initial</td></tr>
                </tbody>
            </table>
        </section>
    </div>

    <section class="pane wave-pane">
        <div class="pane-title">
            <svg class="icon"><use href="#waveform"/></svg>
            <span>Wave - Default</span>
            <i class="rail long"></i><i class="dots"></i><i class="rail"></i>
        </div>
        <div class="wave">
            <div class="wave-names">
                <div class="wave-head"><svg class="icon"><use href="#shapes"/></svg><button class="caret" title="Signals menu"></button></div>
            </div>
            <div class="wave-values">
                <div class="wave-head">Msgs</div>
            </div>
            <div class="wave-plot">
                <div class="wave-head"><i class="cursor"></i></div>
                <div class="gridlines"><i></i><i></i><i></i><i></i><i></i><i></i><i></i><i></i><i></i><i></i></div>
            </div>
        </div>
    </section>
</main>

<!-- Context menu of the Objects pane -->
<div class="context-menu" role="menu">
    <button disabled>View Declaration</button>
    <button disabled>View Memory Contents</button>
    <hr>
    <button>Add Wave<kbd>Ctrl+W</kbd></button>
    <button>Add Wave New</button>
    <button class="sub" disabled>Add Wave To</button>
    <button>Add Dataflow<kbd>Ctrl+D</kbd></button>
    <button class="sub">Add to</button>
    <hr>
    <button class="sub" disabled>UPF</button>
    <button class="sub">Event Traceback</button>
    <hr>
    <button>Copy<kbd>Ctrl+C</kbd></button>
    <button>Find...<kbd>Ctrl+F</kbd></button>
    <hr>
    <button disabled>Insert Breakpoint</button>
    <button class="sub">Toggle Coverage</button>
    <hr>
    <button class="sub">Modify</button>
    <button>Radix...</button>
    <hr>
    <button class="sub">Show</button>
</div>

<!-- Highlight frames -->
<div class="mark mark-instance"></div>
<div class="mark mark-objects"></div>
<div class="mark mark-add"></div>

<div class="watermark">CSDN @呜呼啦呼_l</div>

</body>
</html>
```
FILE: styles.css
```css
* {
    box-sizing: border-box;
}

body {
    font-family: "Noto Sans", Tahoma, sans-serif;
    font-size: 13px;
    color: #111;
    background-color: #fff;
    display: flex;
    flex-direction: column;
    height: 100vh;
    margin: 0;
    overflow: hidden;
    position: relative;
}

button, input, select {
    font: inherit;
    color: inherit;
    margin: 0;
    padding: 0;
    border: none;
    border-radius: 0;
    background: none;
}

i, kbd {
    font-style: normal;
    font-family: inherit;
}

svg {
    display: block;
    flex: none;
}

.sprite {
    position: absolute;
}

/* Title and menu */
.titlebar {
    display: flex;
    align-items: center;
    gap: 6px;
    height: 28px;
    flex: none;
    padding-left: 3px;
    font-family: "Open Sans", "Segoe UI", sans-serif;
    font-size: 16px;
    color: #000;
}

.logo {
    width: 18px;
    height: 18px;
}

.menubar {
    display: flex;
    gap: 16px;
    height: 26px;
    flex: none;
    padding: 0 9px;
    font-size: 16px;
}

.menubar button {
    line-height: 25px;
    height: 25px;
}

.menubar u {
    text-underline-offset: 2px;
}

/* Toolbars */
.toolbars {
    flex: none;
    background-color: #efefef;
    border-top: 1px solid #8c8c8c;
}

.toolrow {
    display: flex;
    height: 40px;
    padding-left: 1px;
}

.toolbar {
    display: flex;
    align-items: center;
    flex: none;
    height: 40px;
    padding: 0 6px 0 2px;
    border-top: 1px solid #fff;
    border-left: 1px solid #fff;
    border-right: 2px solid #7c7c7c;
    border-bottom: 2px solid #7c7c7c;
}

.toolbar::before {
    content: "";
    width: 3px;
    height: 35px;
    margin-right: 6px;
    border-left: 1px solid #fff;
    border-right: 1px solid #777;
    border-bottom: 1px solid #777;
}

.toolbar.last {
    border-right: none;
    padding-right: 0;
}

.toolbar.push {
    margin-left: 355px;
}

.tool {
    display: flex;
    align-items: center;
    justify-content: center;
    flex: none;
    width: 27px;
    height: 25px;
    padding-bottom: 4px;
}

.tool svg {
    width: 20px;
    height: 20px;
}

.boxed {
    width: 25px;
    height: 25px;
    margin: 0 4px;
    padding: 0;
    border: 1px solid #fff;
    border-right: 2px solid #888;
    border-bottom: 2px solid #888;
}

.boxed.on {
    background-color: #fff;
    border: 2px solid #888;
    border-right: 1px solid #e4e4e4;
    border-bottom: 1px solid #e4e4e4;
}

.push .boxed {
    line-height: 20px;
}

.push .all {
    font-family: "Open Sans", sans-serif;
    font-size: 10px;
    font-weight: 800;
}

.caret {
    flex: none;
    width: 12px;
    height: 20px;
    display: flex;
    align-items: center;
    justify-content: center;
}

.caret::after {
    content: "";
    border: 4px solid transparent;
    border-top: 4px solid #000;
    border-bottom: none;
}

.caret.small::after {
    border-width: 3px;
    border-bottom: none;
}

.sep {
    flex: none;
    width: 2px;
    height: 22px;
    margin: 0 7px;
    border-left: 2px dotted #666;
}

.boxed + .sep {
    margin-left: 3px;
}

.field {
    height: 25px;
    border: 1px solid #fff;
    border-top: 2px solid #999;
    border-left: 2px solid #999;
    background-color: #fff;
    appearance: none;
    font-family: "Liberation Mono", "Courier New", monospace;
    font-size: 14px;
    color: #222;
}

.combo-bar label {
    margin: 0 7px 6px 7px;
}

.help-bar label {
    margin: 0 7px 2px 10px;
    font-size: 14px;
}

.combo-bar .field {
    background-color: #efefef;
    margin: 0 3px 4px 0;
    padding-left: 2px;
}

.combo-bar {
    padding-right: 10px;
}

.layout-select {
    width: 153px;
}

.column-select {
    width: 267px;
}

.help-field {
    width: 92px;
    margin-right: 7px;
    margin-bottom: 2px;
}

.time-field {
    width: 74px;
    margin-left: 5px;
    text-align: right;
    padding-right: 1px;
}

.search-field, .search-field:disabled {
    width: 147px;
    background-color: #efefef;
    margin: 0 3px 0 7px;
}

.drop {
    flex: none;
    width: 22px;
    height: 22px;
    margin-bottom: 4px;
    border: 1px solid #fff;
    border-right: 2px solid #888;
    border-bottom: 2px solid #888;
    display: flex;
    align-items: center;
    justify-content: center;
}

.drop::after {
    content: "";
    border: 8px solid transparent;
    border-top: 9px solid #000;
    border-bottom: none;
}

.drop.off::after {
    border-top-color: #777;
}

.off {
    color: #888;
}

.search-bar {
    padding-right: 12px;
}

.search-bar .off, .search-bar .search-field {
    margin-bottom: 4px;
}

.search-bar label {
    margin-left: 4px;
    font-size: 14px;
}

.spinner {
    display: flex;
    flex-direction: column;
    width: 17px;
    margin: 0 7px 0 2px;
}

.spinner button {
    height: 12px;
    font-size: 9px;
    line-height: 9px;
    font-family: "DejaVu Sans", sans-serif;
    border-right: 2px solid #888;
    border-bottom: 2px solid #888;
    border-top: 1px solid #fff;
}

/* Panes */
.workspace {
    flex: 1;
    min-height: 0;
    display: flex;
    gap: 10px;
    background-color: #c9c9c9;
    border-top: 2px solid #b4b4b4;
    padding-left: 2px;
}

.pane {
    background-color: #fff;
    border: 1px solid #999;
    border-top-color: #fff;
    min-width: 0;
    overflow: hidden;
}

.sim-pane {
    width: 523px;
    flex: none;
}

.middle {
    width: 300px;
    flex: none;
    display: flex;
    flex-direction: column;
    gap: 10px;
}

.objects-pane {
    height: 533px;
    flex: none;
    display: flex;
    flex-direction: column;
    background-color: #505a8a;
}

.process-pane {
    flex: 1;
    background-color: #8aa0ff;
}

.wave-pane {
    flex: 1;
    display: flex;
    flex-direction: column;
    border-right: none;
}

.middle .pane {
    border-left: 2px solid #e8e8e8;
    border-right: 2px solid #b4b4b4;
}

.pane-title {
    display: flex;
    align-items: center;
    flex: none;
    height: 24px;
    background-color: #efefef;
    padding: 0 2px 0 1px;
    white-space: nowrap;
}

.pane-title.active {
    background-color: #9ab4d2;
}

.icon {
    width: 20px;
    height: 20px;
}

.pane-title span {
    margin: 0 7px 0 4px;
}

.rail {
    flex: 1;
    height: 9px;
    border-top: 2px solid #888;
    border-bottom: 2px solid #888;
    background-color: #fafafa;
}

.rail.long {
    flex: 7;
}

.active .rail {
    border-color: #111;
    background-color: #b4d0e8;
}

.dots {
    width: 22px;
    height: 9px;
    margin: 0 3px;
    background-image: radial-gradient(#777 1px, transparent 1px);
    background-size: 4px 4px;
}

.win {
    width: 16px;
    height: 16px;
    margin-left: 5px;
    padding: 1px;
    background-color: #efefef;
    border: 1px solid #fff;
    border-right: 2px solid #777;
    border-bottom: 2px solid #777;
    flex: none;
}

.win svg {
    width: 11px;
    height: 11px;
}

.grid {
    width: 100%;
    table-layout: fixed;
    border-collapse: separate;
    border-spacing: 0;
    line-height: 18px;
}

.grid th {
    height: 21px;
    padding: 0;
    text-align: left;
    font-weight: normal;
    background-color: #efefef;
    border-top: 1px solid #999;
    border-right: 1px solid #777;
    border-bottom: 2px solid #888;
    white-space: nowrap;
    overflow: hidden;
}

.grid td {
    height: 20px;
    padding: 0;
    white-space: nowrap;
    overflow: hidden;
}

.pick {
    display: inline-block;
    width: 15px;
    height: 18px;
    margin-right: 3px;
    border-right: 1px solid #888;
    vertical-align: top;
}

.pick::after {
    content: "";
    display: block;
    margin: 5px 2px;
    border: 5px solid transparent;
    border-top: 7px solid #555;
    border-bottom: none;
}

.sort {
    float: right;
    font-family: "DejaVu Sans", sans-serif;
    font-size: 11px;
    color: #777;
    margin-right: 3px;
}

.sim-grid th:first-child {
    width: 368px;
}

.sim-grid tbody::before, .objects-grid tbody::before {
    content: "";
    display: block;
    height: 4px;
}

.selected td:first-child {
    background-color: #bccad8;
}

.node {
    display: flex;
    align-items: center;
    height: 18px;
    padding-left: 7px;
}

.sim-grid .node {
    padding-left: 8px;
}

.sim-grid .child {
    padding-left: 30px;
}

.sim-grid .leaf {
    padding-left: 25px;
}

.twist {
    flex: none;
    width: 13px;
    height: 13px;
    border: 1px solid #9aa4b4;
    border-radius: 2px;
    background-color: #f8f8fc;
    font-family: "DejaVu Sans", sans-serif;
    font-size: 12px;
    font-weight: bold;
    line-height: 10px;
    text-align: center;
    color: #000;
}

.dash {
    flex: none;
    width: 6px;
    border-top: 1px solid #888;
}

.elbow {
    flex: none;
    width: 13px;
    height: 20px;
    margin: 0 0 18px 6px;
    border-left: 1px solid #888;
    border-bottom: 1px solid #888;
}

.none {
    visibility: hidden;
}

.shape {
    width: 16px;
    height: 16px;
    margin-right: 8px;
}

.sim-grid .shape {
    margin-left: 2px;
}

.shape.wide {
    width: 20px;
    height: 20px;
}

.shape.gem {
    width: 18px;
    height: 18px;
    margin-right: 6px;
}

.c-name {
    width: 184px;
}

.c-value {
    width: 54px;
}

.c-kind {
    width: 49px;
}

.objects-grid tbody td {
    background-color: #fff;
    border-bottom: 2px solid #505a8a;
    padding-left: 3px;
}

.objects-grid tbody td:first-child {
    padding-left: 0;
}

.objects-grid tbody td:last-child {
    padding-left: 1px;
}

.now-bar {
    display: flex;
    align-items: center;
    height: 18px;
    color: #888;
    background-color: #e2eadf;
    font-family: "Liberation Mono", monospace;
    font-size: 14px;
}

.now-bar svg {
    width: 18px;
    height: 14px;
    margin: 0 2px;
}

.now {
    display: flex;
    align-items: center;
    gap: 5px;
    width: 52px;
    height: 18px;
    padding-left: 6px;
    border-left: 1px solid #bbb;
    border-right: 1px solid #bbb;
}

.now i {
    width: 10px;
    height: 10px;
    background-color: #ff8800;
    border: 1px solid #333;
}

.now-bar b {
    flex: 1;
    height: 18px;
    padding: 4px 4px;
    background-color: #efefef;
}

.now-bar b::after {
    content: "";
    display: block;
    width: 0;
    border: 5px solid transparent;
    border-left: 6px solid #000;
    border-right: none;
}

.hscroll {
    display: flex;
    height: 24px;
    margin-top: auto;
    background-color: #efefef;
    border-top: 1px solid #fff;
    padding: 4px 0 2px;
}

.hscroll button {
    width: 20px;
    border-right: 2px solid #888;
}

.hscroll button::after {
    content: "";
    display: block;
    width: 0;
    margin-left: 7px;
    border: 4px solid transparent;
    border-right: 4px solid #000;
    border-left: none;
}

.hscroll span {
    flex: 1;
    border-top: 1px solid #ddd;
    border-bottom: 1px solid #999;
}

.process-grid {
    color: #fff;
}

.process-grid th {
    color: #111;
}

.process-grid th:last-child {
    padding-left: 2px;
}

.process-grid td {
    height: 25px;
    padding-left: 2px;
}

.process-grid .node {
    padding-left: 24px;
}

/* Wave pane */
.wave {
    flex: 1;
    display: flex;
    border-top: 1px solid #999;
    border-left: 2px solid #999;
}

.wave-names {
    width: 199px;
    border-right: 1px solid #999;
}

.wave-values {
    width: 129px;
    border-right: 1px solid #999;
}

.wave-plot {
    flex: 1;
    min-width: 0;
    display: flex;
    flex-direction: column;
    overflow: hidden;
}

.wave-head {
    display: flex;
    align-items: center;
    height: 25px;
    flex: none;
    border-bottom: 1px solid #999;
}

.wave-names .wave-head {
    padding-left: 12px;
    gap: 3px;
}

.wave-values .wave-head {
    justify-content: flex-end;
    padding-right: 7px;
}

.cursor {
    width: 1px;
    height: 24px;
    margin-left: 6px;
    background-color: #c4a878;
}

.gridlines {
    flex: 1;
    display: flex;
    margin: 3px -18px 0 6px;
    border-left: 1px solid #c4a878;
}

.gridlines i {
    flex: 1;
    border-right: 1px solid #aaa;
}

/* Context menu */
.context-menu {
    position: absolute;
    left: 744px;
    top: 276px;
    width: 247px;
    padding: 3px 0;
    background-color: #efefef;
    border: 1px solid #999;
    border-right: 2px solid #888;
    border-bottom: 2px solid #888;
    box-shadow: 3px 4px 3px rgba(0, 0, 0, 0.4);
}

.context-menu button {
    display: flex;
    align-items: center;
    width: 100%;
    height: 25px;
    padding: 0 11px 2px 28px;
    text-align: left;
}

.context-menu button:disabled {
    color: #868686;
}

.context-menu kbd {
    width: 59px;
    margin-left: auto;
}

.context-menu .sub::after {
    content: "";
    margin-left: auto;
    border: 5px solid transparent;
    border-left: 5px solid currentColor;
    border-right: none;
}

.context-menu hr {
    height: 2px;
    margin: 4px 3px 5px;
    border: none;
    border-top: 1px solid #999;
    border-bottom: 1px solid #fff;
}

/* Highlight frames */
.mark {
    position: absolute;
    border: 4px solid #ff2818;
    border-radius: 5px;
}

.mark-instance {
    left: 21px;
    top: 217px;
    width: 119px;
    height: 34px;
}

.mark-objects {
    left: 523px;
    top: 213px;
    width: 229px;
    height: 85px;
}

.mark-add {
    left: 752px;
    top: 331px;
    width: 264px;
    height: 42px;
}

.watermark {
    position: absolute;
    right: 14px;
    bottom: 5px;
    font-family: "Liberation Sans", "Noto Sans CJK SC", sans-serif;
    font-size: 19px;
    line-height: 30px;
    color: #999;
    text-shadow: 1px 1px #fff;
}
```
